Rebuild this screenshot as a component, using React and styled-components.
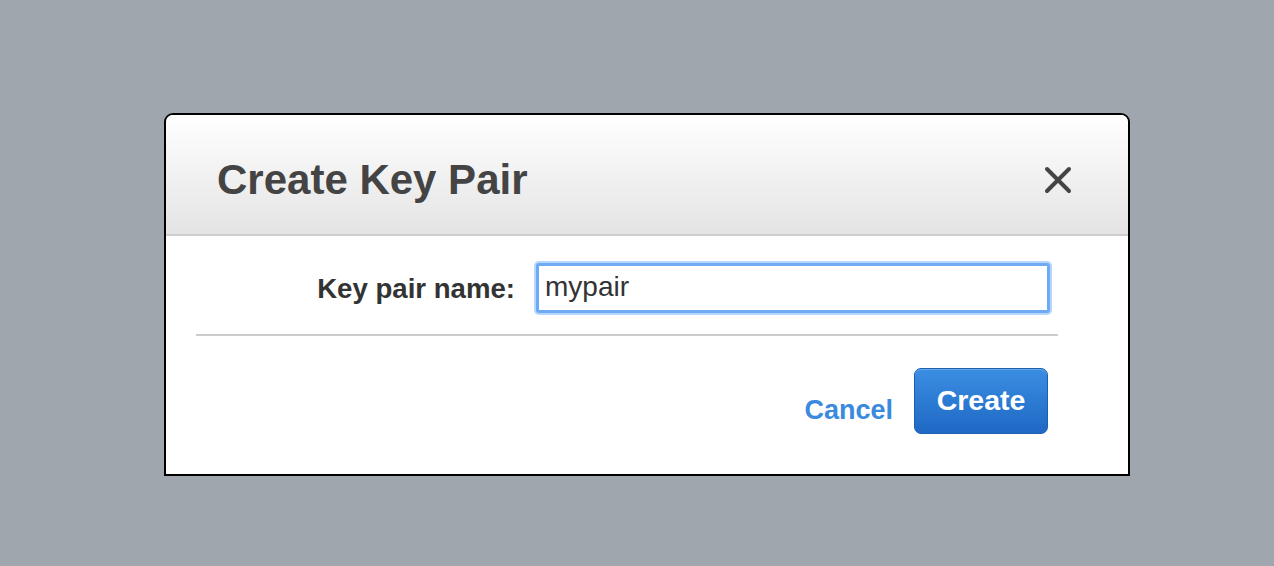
import styled, { createGlobalStyle } from "styled-components";

const GlobalStyle = createGlobalStyle`
  html, body {
    margin: 0;
    padding: 0;
    background: #9fa6ae;
    font-family: "Liberation Sans", Arial, sans-serif;
  }
`;

const Page = styled.div`
  width: 1274px;
  height: 566px;
  padding-top: 113px;
  padding-left: 164px;
  box-sizing: border-box;
`;

const Modal = styled.div`
  width: 966px;
  height: 363px;
  box-sizing: border-box;
  background: #fff;
  border: 2px solid #000;
  border-radius: 9px 9px 0 0;
  overflow: hidden;
  display: flex;
  flex-direction: column;
`;

const Header = styled.div`
  height: 121px;
  box-sizing: border-box;
  border-bottom: 2px solid #cfcfcf;
  background: linear-gradient(#ffffff, #e4e4e4);
  display: flex;
  align-items: center;
  justify-content: space-between;
  padding: 10px 56px 0 51px;
`;

const Title = styled.h1`
  margin: 0;
  font-size: 42px;
  font-weight: bold;
  color: #444;
`;

const Close = styled.button`
  border: 0;
  background: none;
  padding: 0;
  width: 28px;
  height: 28px;
  display: flex;
  cursor: pointer;
`;

const Body = styled.div`
  padding: 27px 0 0 30px;
`;

const FieldRow = styled.div`
  display: flex;
  align-items: center;
  justify-content: flex-end;
  gap: 21px;
  width: 854px;
  padding-bottom: 21px;
`;

const Label = styled.label`
  font-size: 27.6px;
  font-weight: bold;
  color: #333;
  padding-top: 2px;
`;

const Input = styled.input`
  width: 514px;
  height: 50px;
  box-sizing: border-box;
  font-family: "Liberation Sans", Arial, sans-serif;
  font-size: 28px;
  color: #333;
  padding: 0 6px 2px;
  border: 3px solid #6faaf5;
  border-radius: 3px;
  box-shadow: 0 0 0 2px #b7d6fb;
  outline: none;
`;

const Divider = styled.hr`
  margin: 0;
  width: 862px;
  border: 0;
  border-top: 2px solid #cccccc;
`;

const Footer = styled.div`
  display: flex;
  justify-content: flex-end;
  align-items: center;
  gap: 21px;
  padding: 32px 80px 0 0;
`;

const Cancel = styled.a`
  font-size: 27px;
  font-weight: bold;
  color: #3a8ade;
  text-decoration: none;
  margin-top: 19px;
  cursor: pointer;
`;

const Primary = styled.button`
  width: 134px;
  height: 66px;
  border: 1px solid #1c5eb0;
  border-radius: 7px;
  background: linear-gradient(#3a8ee2, #1f68c4);
  box-shadow: inset 0 1px 0 rgba(255, 255, 255, 0.25);
  color: #fff;
  font-family: "Liberation Sans", Arial, sans-serif;
  font-size: 28.5px;
  font-weight: bold;
  padding: 0 0 1px;
  cursor: pointer;
`;

export default function App() {
  return (
    <>
      <GlobalStyle />
      <Page>
        <Modal>
          <Header>
            <Title>Create Key Pair</Title>
            <Close aria-label="Close">
              <svg width="28" height="28" viewBox="0 0 28 28">
                <path
                  d="M3 3 L25 25 M25 3 L3 25"
                  stroke="#444"
                  strokeWidth="4"
                  strokeLinecap="round"
                />
              </svg>
            </Close>
          </Header>
          <Body>
            <FieldRow>
              <Label htmlFor="kp">Key pair name:</Label>
              <Input id="kp" defaultValue="mypair" />
            </FieldRow>
            <Divider />
            <Footer>
              <Cancel>Cancel</Cancel>
              <Primary>Create</Primary>
            </Footer>
          </Body>
        </Modal>
      </Page>
    </>
  );
}
